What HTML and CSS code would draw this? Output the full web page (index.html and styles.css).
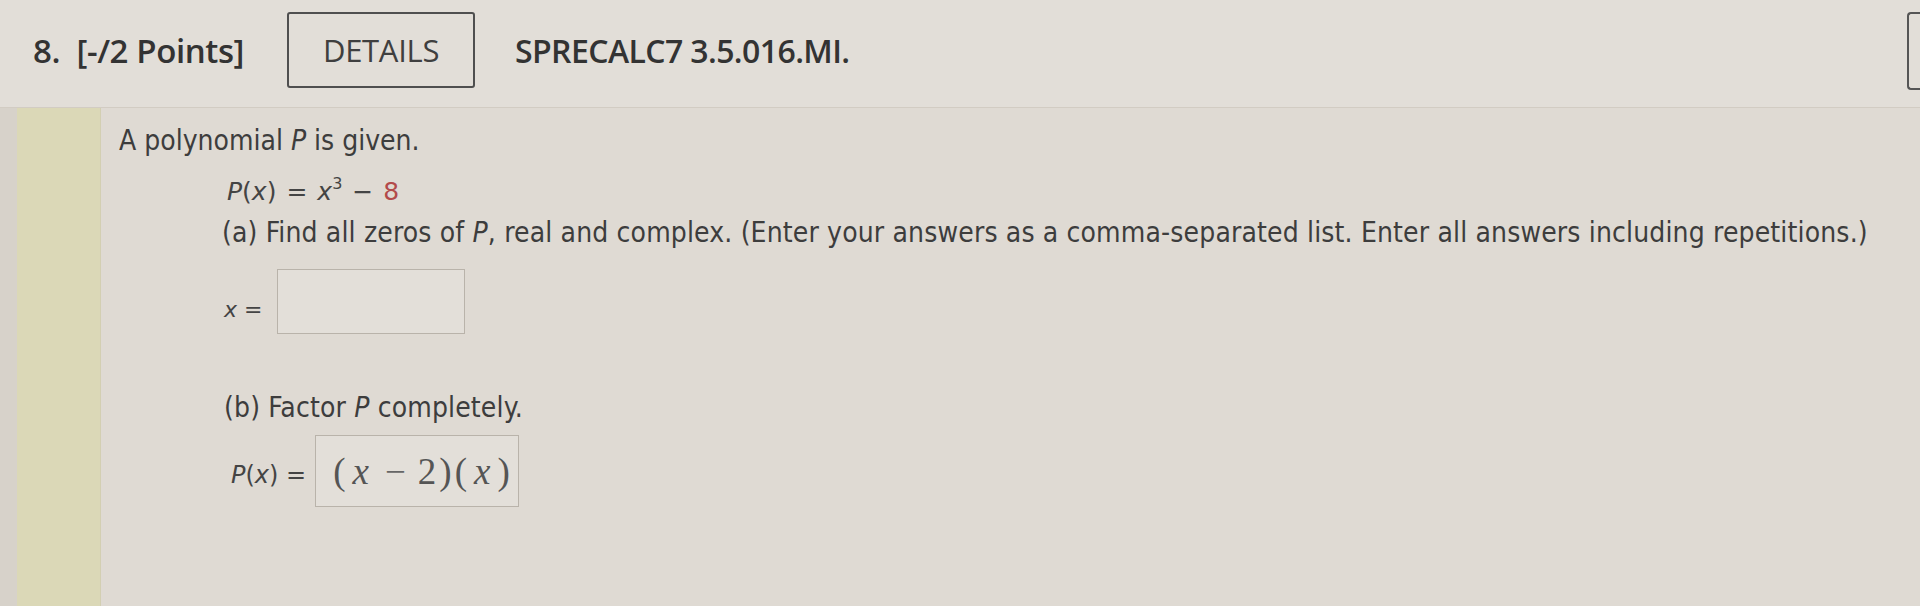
FILE: index.html
```html
<!DOCTYPE html>
<html>
<head>
<meta charset="utf-8">
<link rel="stylesheet" href="styles.css">
</head>
<body>
<div class="page">
  <header class="qhead">
    <span class="hitem qnum">8.&nbsp; [-/2 Points]</span>
    <span class="hitem details">DETAILS</span>
    <span class="hitem qcode">SPRECALC7 3.5.016.MI.</span>
    <span class="edge-btn"></span>
  </header>
  <main class="qbody">
    <div class="gutter"></div>
    <div class="stripe"></div>
    <div class="content">
      <p class="line first">A polynomial <i>P</i> is given.</p>
      <p class="line math"><i>P</i>(<i>x</i>)<span class="op">=</span><i>x</i><sup>3</sup><span class="op">−</span><span class="rnd">8</span></p>
      <p class="line part">(a) Find all zeros of <i>P</i>, real and complex. (Enter your answers as a comma-separated list. Enter all answers including repetitions.)</p>
      <div class="answer-row a-row">
        <span class="lbl lbl-x"><i>x</i> =</span>
        <span class="box box-a"></span>
      </div>
      <p class="line part part-b">(b) Factor <i>P</i> completely.</p>
      <div class="answer-row b-row">
        <span class="lbl lbl-p"><i>P</i>(<i>x</i>) =</span>
        <span class="box box-b"><span class="mj">(<i class="mv">x</i><span class="mo">−</span>2)(<i class="mv">x</i>)</span></span>
      </div>
    </div>
  </main>
</div>
</body>
</html>
```

FILE: styles.css
```css
html, body {
  margin: 0;
  padding: 0;
  width: 1920px;
  height: 606px;
  overflow: hidden;
  background: #ddd8d0;
}

.page {
  width: 1920px;
  height: 606px;
  display: flex;
  flex-direction: column;
}

.qhead {
  height: 95px;
  flex: none;
  display: flex;
  align-items: flex-start;
  padding-top: 12px;
  padding-left: 33px;
  background: #e2ded8;
  border-bottom: 1px solid #d2ccc3;
  font-family: "Open Sans", "Liberation Sans", sans-serif;
  color: #333;
}

.hitem {
  height: 76px;
  box-sizing: border-box;
  display: flex;
  align-items: center;
  white-space: nowrap;
}

.qnum {
  font-size: 33px;
  font-weight: 600;
  letter-spacing: -0.4px;
}

.details {
  margin-left: 43px;
  width: 188px;
  border: 2px solid #4f4f4f;
  border-radius: 3px;
  justify-content: center;
  font-size: 31px;
  color: #3f3f3f;
  letter-spacing: -0.3px;
}

.qcode {
  margin-left: 40px;
  font-size: 32px;
  font-weight: 600;
  letter-spacing: -0.6px;
}

.edge-btn {
  margin-left: auto;
  width: 11px;
  height: 74px;
  border: 2px solid #555;
  border-right: none;
  border-radius: 4px 0 0 4px;
  flex: none;
}

.qbody {
  flex: 1;
  display: flex;
}

.gutter {
  width: 17px;
  background: #d7d2ca;
}

.stripe {
  width: 83px;
  background: #dbd8b7;
  border-right: 1px solid #d3cfb2;
}

.content {
  flex: 1;
  padding-left: 18px;
  padding-top: 19px;
  background: #dfdad3;
  font-family: "DejaVu Sans Condensed", "DejaVu Sans", Verdana, sans-serif;
  font-stretch: condensed;
  font-size: 28px;
  color: #3d3d3d;
}

.line {
  margin: 0;
  line-height: 28px;
  white-space: nowrap;
}

.math {
  margin-top: 23px;
  margin-left: 108px;
  font-family: "DejaVu Sans", Verdana, sans-serif;
  font-stretch: normal;
  font-size: 25px;
  color: #444;
  letter-spacing: 0;
}

.op {
  margin: 0 10px;
}

.math sup {
  font-size: 16px;
  vertical-align: 11px;
  line-height: 0;
}

.rnd {
  color: #b34a4a;
}

.part {
  margin-top: 13px;
  margin-left: 103px;
  letter-spacing: 0.15px;
}

.part-b {
  margin-top: 60px;
  margin-left: 105px;
}

.answer-row {
  display: flex;
  align-items: flex-end;
  margin-left: 105px;
}

.a-row {
  margin-top: 22px;
}

.b-row {
  margin-top: 13px;
  align-items: center;
}

.lbl {
  font-family: "DejaVu Sans", Verdana, sans-serif;
  font-stretch: normal;
  font-size: 22px;
  line-height: 28px;
  color: #444;
  white-space: nowrap;
}

.lbl-x {
  margin-bottom: 10px;
  width: 39px;
  margin-right: 14px;
}

.lbl-p {
  font-size: 24px;
  margin-left: 7px;
  margin-right: 9px;
  margin-top: 8px;
}

.box {
  display: flex;
  align-items: center;
  background: #e3dfd9;
  border: 1px solid #b9b3aa;
  box-sizing: border-box;
}

.box-a {
  width: 188px;
  height: 65px;
}

.box-b {
  width: 204px;
  height: 72px;
  padding-left: 17px;
}

.mj {
  font-family: "Liberation Serif", "DejaVu Serif", serif;
  font-size: 37px;
  color: #555;
  letter-spacing: 3px;
  white-space: nowrap;
}

.mv {
  padding: 0 4px;
}

.mo {
  padding: 0 9px;
  color: #666;
}
```
